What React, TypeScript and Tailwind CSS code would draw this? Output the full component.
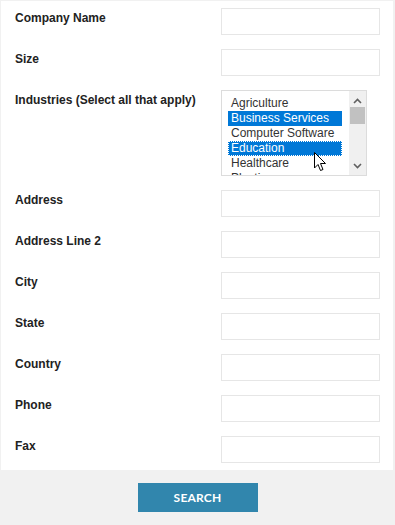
import React from 'react'

const fields = ['Company Name', 'Size']
const addressFields = ['Address', 'Address Line 2', 'City', 'State', 'Country', 'Phone', 'Fax']
const industries = [
  { name: 'Agriculture', selected: false },
  { name: 'Business Services', selected: true },
  { name: 'Computer Software', selected: false },
  { name: 'Education', selected: true, focused: true },
  { name: 'Healthcare', selected: false },
  { name: 'Plastics', selected: false },
]

const labelClass =
  "flex-1 pl-[14px] pt-[3px] text-[12px] leading-[14px] font-bold text-[#222] font-['Liberation_Sans',Arial,sans-serif]"

function TextRow({ label }: { label: string }) {
  return (
    <div className="flex items-start">
      <label className={labelClass}>{label}</label>
      <input type="text" className="w-[159px] h-[27px] border border-[#e6e6e6] bg-white outline-none" />
    </div>
  )
}

function Cursor() {
  return (
    <svg className="absolute left-[92px] top-[61px]" width="13" height="20" viewBox="0 0 13 20">
      <path
        d="M0.5 0.5 L0.5 16 L4 12.5 L6.5 18.5 L9 17.5 L6.5 11.5 L11.5 11.5 Z"
        fill="white"
        stroke="black"
        strokeWidth="1"
        strokeLinejoin="miter"
      />
    </svg>
  )
}

function IndustriesList() {
  return (
    <div className="relative flex w-[146px] h-[86px] border border-[#dcdcdc] bg-white overflow-hidden font-['Liberation_Sans',Arial,sans-serif]">
      <div className="flex-1 pl-[6px] pt-[5px]">
        {industries.map((item) => (
          <div
            key={item.name}
            className={
              item.selected
                ? item.focused
                  ? 'h-[15px] pl-[3px] text-[12px] leading-[15px] bg-[#0078d7] text-white outline outline-1 outline-dotted outline-offset-[-1px] outline-white w-[114px]'
                  : 'h-[15px] pl-[3px] text-[12px] leading-[15px] bg-[#0078d7] text-white w-[114px]'
                : 'h-[15px] pl-[3px] text-[12px] leading-[15px] text-[#333]'
            }
          >
            {item.name}
          </div>
        ))}
      </div>
      <div className="w-[17px] bg-[#f0f0f0] flex flex-col items-center">
        <svg className="mt-[7px]" width="9" height="6" viewBox="0 0 9 6">
          <path d="M1 5 L4.5 1.5 L8 5" fill="none" stroke="#606060" strokeWidth="1.6" />
        </svg>
        <div className="mt-[3px] w-[15px] h-[17px] bg-[#c1c1c1]" />
        <div className="flex-1" />
        <svg className="mb-[6px]" width="9" height="6" viewBox="0 0 9 6">
          <path d="M1 1 L4.5 4.5 L8 1" fill="none" stroke="#606060" strokeWidth="1.6" />
        </svg>
      </div>
      <Cursor />
    </div>
  )
}

export default function App() {
  return (
    <div className="w-[395px] min-h-[525px] bg-[#f1f1f1] pt-px pl-px">
      <div className="w-[392px] bg-white pt-[7px] pb-[7px] pr-[13px]">
        <div className="flex flex-col gap-[14px]">
          {fields.map((f) => (
            <TextRow key={f} label={f} />
          ))}
          <div className="flex items-start">
            <label className={labelClass}>Industries (Select all that apply)</label>
            <div className="w-[159px]">
              <IndustriesList />
            </div>
          </div>
          {addressFields.map((f) => (
            <TextRow key={f} label={f} />
          ))}
        </div>
      </div>
      <div className="flex justify-center pt-[13px] pr-px">
        <button className="w-[120px] h-[29px] bg-[#3186ad] text-white text-[12px] font-bold font-['Lato',sans-serif] tracking-[0.2px]">
          SEARCH
        </button>
      </div>
    </div>
  )
}
